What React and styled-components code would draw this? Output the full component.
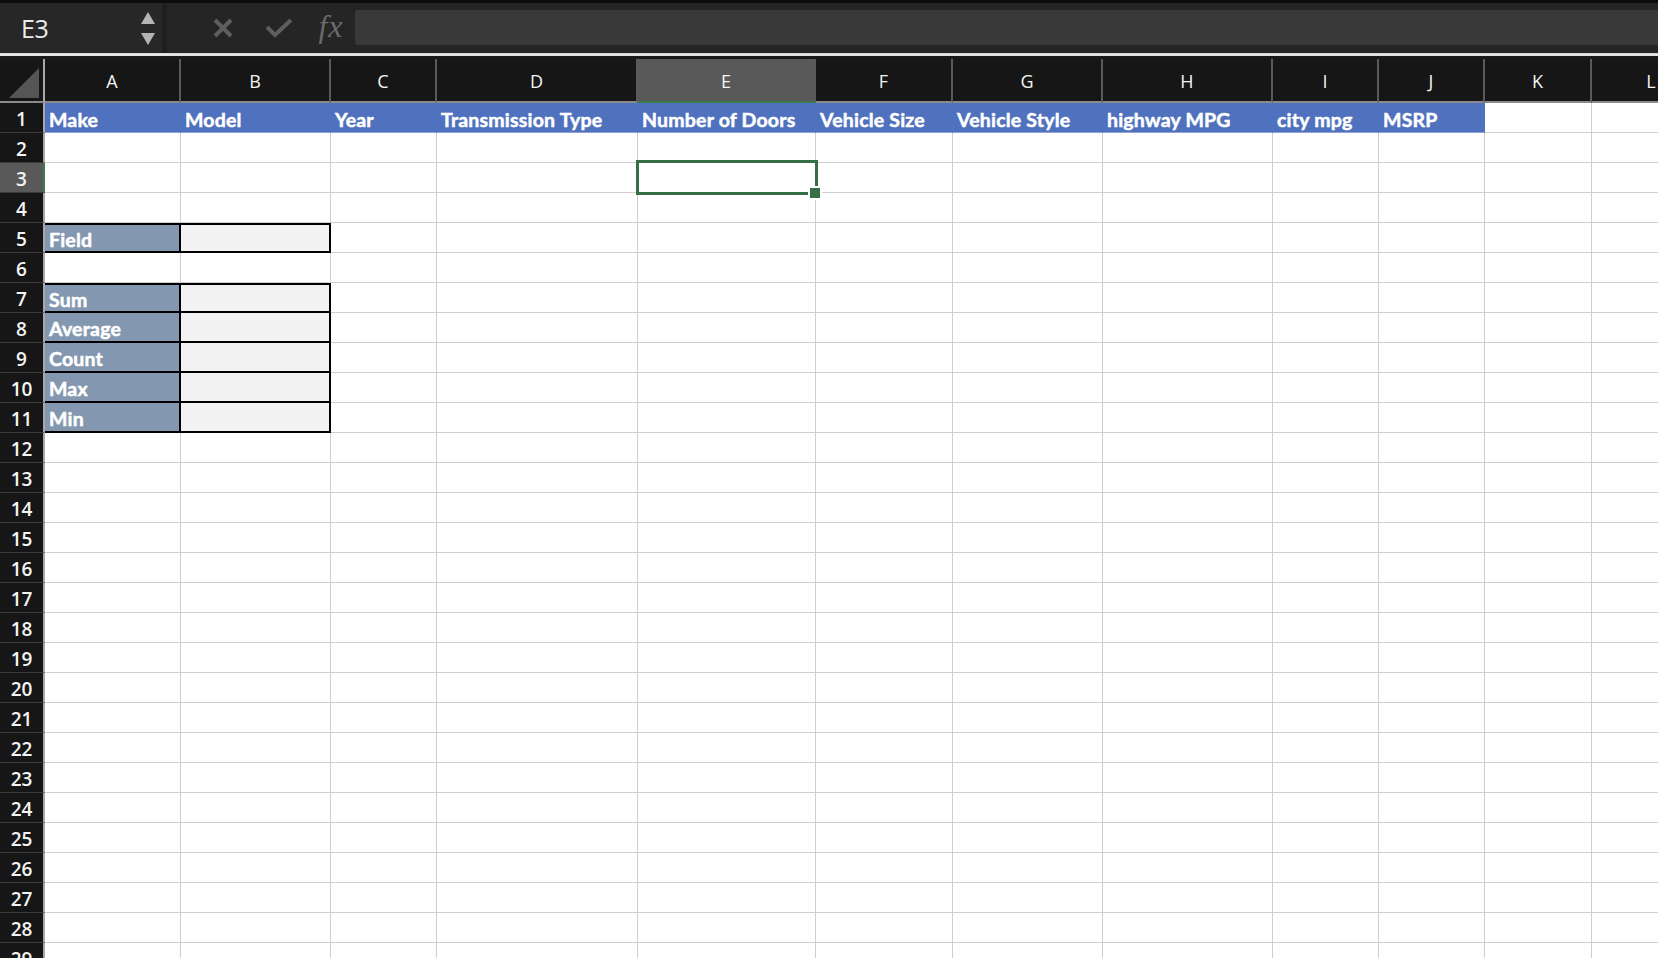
import React from 'react';
import styled, { createGlobalStyle, css } from 'styled-components';

const GlobalStyle = createGlobalStyle`
  html, body {
    margin: 0;
    padding: 0;
    background: #ffffff;
    overflow: hidden;
  }
  body {
    font-family: 'Open Sans', 'Liberation Sans', sans-serif;
  }
`;

const COLUMNS = [
  { key: 'A', width: 136 },
  { key: 'B', width: 150 },
  { key: 'C', width: 106 },
  { key: 'D', width: 201 },
  { key: 'E', width: 178 },
  { key: 'F', width: 137 },
  { key: 'G', width: 150 },
  { key: 'H', width: 170 },
  { key: 'I', width: 106 },
  { key: 'J', width: 106 },
  { key: 'K', width: 107 },
  { key: 'L', width: 120 },
];

const TITLES = [
  'Make',
  'Model',
  'Year',
  'Transmission Type',
  'Number of Doors',
  'Vehicle Size',
  'Vehicle Style',
  'highway MPG',
  'city mpg',
  'MSRP',
];

const LABELS = { 5: 'Field', 7: 'Sum', 8: 'Average', 9: 'Count', 10: 'Max', 11: 'Min' };
const ROW_COUNT = 29;
const ACTIVE_ROW = 3;
const ACTIVE_COL = 'E';

const Page = styled.div`
  width: 1658px;
  height: 958px;
  display: flex;
  flex-direction: column;
  background: #0c0c0c;
  padding-top: 3px;
  box-sizing: border-box;
  overflow: hidden;
`;

const FormulaBar = styled.div`
  height: 50px;
  display: flex;
  align-items: stretch;
  background: #252525;
  flex-shrink: 0;
`;

const NameBox = styled.div`
  width: 167px;
  display: flex;
  align-items: center;
  justify-content: space-between;
  padding: 0 7px 0 21px;
  box-sizing: border-box;
  background: #272727;
  border-right: 5px solid #1e1e1e;
`;

const CellRef = styled.span`
  color: #ececec;
  font-family: 'Open Sans', 'Liberation Sans', sans-serif;
  font-size: 25px;
  letter-spacing: -0.5px;
`;

const Stepper = styled.div`
  display: flex;
  flex-direction: column;
  gap: 9px;
`;

const Arrow = styled.div`
  width: 0;
  height: 0;
  border-left: 7px solid transparent;
  border-right: 7px solid transparent;
  ${({ $down }) =>
    $down
      ? css`border-top: 12px solid #b4b4b4;`
      : css`border-bottom: 12px solid #b4b4b4;`}
`;

const Controls = styled.div`
  display: flex;
  align-items: center;
  padding-left: 28px;
  width: 188px;
  box-sizing: border-box;
`;

const IconSlot = styled.div`
  width: ${({ $w }) => $w}px;
  display: flex;
  align-items: center;
  justify-content: center;
`;

const Fx = styled.span`
  font-family: 'Liberation Serif', 'DejaVu Serif', serif;
  font-style: italic;
  font-size: 32px;
  color: #6a6a6a;
  letter-spacing: 1px;
  line-height: 1;
  margin-top: -4px;
`;

const FormulaInput = styled.div`
  flex: 1;
  margin: 7px 0 8px;
  background: #393939;
  border-radius: 3px 0 0 3px;
`;

const Divider = styled.div`
  height: 6px;
  flex-shrink: 0;
  background: linear-gradient(#cfcfcf 0, #f4f4f4 2px, #cfcfcf 3px, #1a1a1a 3px);
`;

const Sheet = styled.div`
  position: relative;
  flex: 1;
  display: grid;
  grid-template-columns: 45px ${COLUMNS.map((c) => c.width + 'px').join(' ')};
  grid-template-rows: 44px;
  grid-auto-rows: 30px;
  background: #ffffff;
  overflow: hidden;
`;

const Corner = styled.div`
  background: #161616;
  border-right: 2px solid #a8a8a8;
  border-bottom: 2px solid #8a8a8a;
  box-sizing: border-box;
  display: flex;
  align-items: flex-end;
  justify-content: flex-end;
  padding: 0 4px 3px 0;
`;

const CornerTriangle = styled.div`
  width: 0;
  height: 0;
  border-left: 30px solid transparent;
  border-bottom: 30px solid #555555;
`;

const ColHeader = styled.div`
  background: ${({ $active }) => ($active ? '#595959' : '#161616')};
  border-right: 2px solid #5a5a5a;
  border-bottom: 2px solid ${({ $active }) => ($active ? '#3b7a4c' : '#8a8a8a')};
  box-sizing: border-box;
  display: flex;
  align-items: center;
  justify-content: center;
  color: #f4f4f4;
  font-family: 'Open Sans', 'Liberation Sans', sans-serif;
  font-size: 18px;
  padding-top: 2px;
`;

const RowHeader = styled.div`
  background: ${({ $active }) => ($active ? '#595959' : '#161616')};
  border-right: 2px solid ${({ $active }) => ($active ? '#3b7a4c' : '#a8a8a8')};
  border-bottom: 1px solid #3a3a3a;
  box-sizing: border-box;
  display: flex;
  align-items: center;
  justify-content: center;
  color: #f4f4f4;
  font-family: 'Open Sans', 'Liberation Sans', sans-serif;
  font-weight: 600;
  font-size: 19px;
  padding-top: 2px;
`;

const Cell = styled.div`
  box-sizing: border-box;
  border-right: 1px solid #cfcfcf;
  border-bottom: 1px solid #cfcfcf;
  background: #ffffff;
  color: #ffffff;
  font-family: Lato, 'Noto Sans', sans-serif;
  font-weight: 700;
  font-size: 19.5px;
  -webkit-text-stroke: 0.5px #ffffff;
  white-space: nowrap;
  overflow: hidden;
  display: flex;
  align-items: center;
  padding: 3px 0 0 4px;
  letter-spacing: 0.2px;

  ${({ $kind }) =>
    $kind === 'title' &&
    css`
      background: #4f71be;
      border-right-color: #4f71be;
      border-bottom-color: #8ea3d6;
    `}

  ${({ $kind }) =>
    $kind === 'label' &&
    css`
      background: #8497b0;
      border-right: 2px solid #000;
      border-bottom: 2px solid #000;
    `}

  ${({ $kind }) =>
    $kind === 'input' &&
    css`
      background: #f2f2f2;
      border-right: 2px solid #000;
      border-bottom: 2px solid #000;
    `}

  ${({ $top }) =>
    $top &&
    css`
      border-top: 2px solid #000;
    `}
`;

const Selection = styled.div`
  position: absolute;
  left: 636px;
  top: 101px;
  width: 182px;
  height: 35px;
  box-sizing: border-box;
  border: 3px solid #366f45;
  pointer-events: none;
`;

const FillHandle = styled.div`
  position: absolute;
  right: -5px;
  bottom: -6px;
  width: 10px;
  height: 10px;
  background: #366f45;
  box-shadow: 0 0 0 2px #ffffff;
`;

function CrossIcon() {
  return (
    <svg width="22" height="22" viewBox="0 0 22 22">
      <path d="M3 3 L19 19 M19 3 L3 19" stroke="#5e5e5e" strokeWidth="4" strokeLinecap="butt" />
    </svg>
  );
}

function CheckIcon() {
  return (
    <svg width="28" height="22" viewBox="0 0 28 22">
      <path d="M2 10 L10 18 L26 3" stroke="#5e5e5e" strokeWidth="4" fill="none" />
    </svg>
  );
}

function cellKind(row, colIndex) {
  if (row === 1 && colIndex < TITLES.length) return 'title';
  if (LABELS[row] && colIndex === 0) return 'label';
  if (LABELS[row] && colIndex === 1) return 'input';
  return null;
}

function cellText(row, colIndex) {
  if (row === 1) return TITLES[colIndex] || '';
  if (colIndex === 0 && LABELS[row]) return LABELS[row];
  return '';
}

export default function App() {
  const rows = Array.from({ length: ROW_COUNT }, (_, i) => i + 1);

  return (
    <>
      <GlobalStyle />
      <Page>
        <FormulaBar>
          <NameBox>
            <CellRef>E3</CellRef>
            <Stepper>
              <Arrow />
              <Arrow $down />
            </Stepper>
          </NameBox>
          <Controls>
            <IconSlot $w={56}>
              <CrossIcon />
            </IconSlot>
            <IconSlot $w={56}>
              <CheckIcon />
            </IconSlot>
            <IconSlot $w={48}>
              <Fx>fx</Fx>
            </IconSlot>
          </Controls>
          <FormulaInput />
        </FormulaBar>
        <Divider />
        <Sheet>
          <Corner>
            <CornerTriangle />
          </Corner>
          {COLUMNS.map((c) => (
            <ColHeader key={c.key} $active={c.key === ACTIVE_COL}>
              {c.key}
            </ColHeader>
          ))}
          {rows.map((row) => (
            <React.Fragment key={row}>
              <RowHeader $active={row === ACTIVE_ROW}>{row}</RowHeader>
              {COLUMNS.map((c, ci) => {
                const kind = cellKind(row, ci);
                return (
                  <Cell
                    key={c.key}
                    $kind={kind}
                    $top={(row === 5 || row === 7) && (kind === 'label' || kind === 'input')}
                  >
                    {cellText(row, ci)}
                  </Cell>
                );
              })}
            </React.Fragment>
          ))}
          <Selection>
            <FillHandle />
          </Selection>
        </Sheet>
      </Page>
    </>
  );
}
